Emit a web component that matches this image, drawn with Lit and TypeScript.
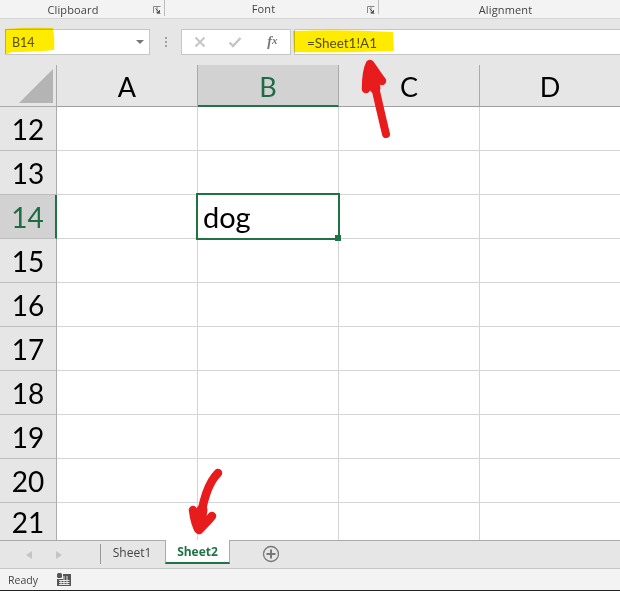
import { LitElement, html, css, svg } from "lit";
import { customElement } from "lit/decorators.js";

const COLS = ["A", "B", "C", "D"];
const ROWS = [12, 13, 14, 15, 16, 17, 18, 19, 20, 21];

@customElement("app-root")
export class AppRoot extends LitElement {
  static styles = css`
    :host { display: block; position: relative; width: 620px; height: 591px; overflow: hidden; background: #fff; font-family: "Lato", "Liberation Sans", sans-serif; color: #000; }
    .ribbon { height: 18px; display: grid; grid-template-columns: 165px 214px 1fr; background: #f3f3f3; border-bottom: 1px solid #d4d4d4; box-sizing: content-box; font-family: "Open Sans", sans-serif; font-size: 11px; letter-spacing: 0.15px; color: #444; }
    .group { position: relative; display: flex; align-items: center; justify-content: center; height: 14px; padding-top: 2px; border-right: 1px solid #bdbdbd; }
    .group:last-child { border-right: 0; padding-left: 12px; padding-right: 0; }
    .group.clip { padding-right: 18px; }
    .group.font { box-sizing: border-box; padding-left: 2px; padding-right: 18px; }
    .launch { position: absolute; right: 3px; top: 6px; width: 8px; height: 8px; }
    .fbar { height: 36px; background: #e6e6e6; display: flex; align-items: flex-end; box-sizing: border-box; padding-left: 5px; }
    .name { width: 145px; height: 26px; box-sizing: border-box; background: #fff; border: 1px solid #c6c6c6; display: flex; align-items: center; justify-content: space-between; padding: 0 5px 0 6px; font: 12.5px "Lato", sans-serif; color: #555; }
    .caret { width: 0; height: 0; border-left: 4px solid transparent; border-right: 4px solid transparent; border-top: 4px solid #777; }
    .grip { width: 31px; display: flex; flex-direction: column; align-items: center; justify-content: center; gap: 2px; height: 26px; }
    .grip i { width: 2px; height: 2px; background: #a0a0a0; }
    .tools { width: 110px; height: 26px; box-sizing: border-box; background: #fff; border: 1px solid #c6c6c6; display: flex; align-items: center; }
    .tools span { flex: 1; display: flex; justify-content: center; }
    .fx { font: italic bold 14px "Liberation Serif", serif; color: #777; padding-left: 2px; }
    .fx small { font-size: 11px; }
    .formula { flex: 1; height: 26px; margin-left: 3px; box-sizing: border-box; background: #fff; border: 1px solid #c6c6c6; border-right: 0; display: flex; align-items: center; padding: 1px 0 0 12px; font: 13.5px "Lato", sans-serif; color: #555; }
    .gap { height: 10px; background: #e6e6e6; }
    .sheet { display: grid; grid-template-columns: 57px repeat(4, 141px); grid-template-rows: 42px repeat(9, 44px) 38px; height: 475px; overflow: hidden; }
    .cell { box-sizing: border-box; border-right: 1px solid #d4d4d4; border-bottom: 1px solid #d4d4d4; background: #fff; font-size: 29px; display: flex; align-items: center; padding-left: 5px; }
    .corner { background: #e6e6e6; border-right: 1px solid #ababab; border-bottom: 1px solid #ababab; display: flex; align-items: flex-end; justify-content: flex-end; padding: 0 3px 3px 0; box-sizing: border-box; }
    .ch { box-sizing: border-box; background: #e6e6e6; border-right: 1px solid #ababab; border-bottom: 1px solid #9f9f9f; display: flex; align-items: center; justify-content: center; font-size: 27px; padding-top: 2px; }
    .ch.on { background: #d2d2d2; color: #1f6b45; border-bottom: 2px solid #217346; }
    .rh { box-sizing: border-box; background: #e6e6e6; border-right: 1px solid #ababab; border-bottom: 1px solid #bdbdbd; display: flex; align-items: center; justify-content: center; font-size: 28px; }
    .rh.on { background: #d2d2d2; color: #1f6b45; border-right: 2px solid #217346; }
    .selected { position: relative; overflow: visible; }
    .selected::after { content: ""; position: absolute; left: -2px; top: -2px; right: -2px; bottom: -2px; border: 2px solid #217346; pointer-events: none; }
    .selected::before { content: ""; position: absolute; right: -3px; bottom: -3px; width: 6px; height: 6px; background: #217346; z-index: 1; }
    .tabs { height: 29px; box-sizing: border-box; background: #e6e6e6; border-top: 1px solid #ababab; border-bottom: 1px solid #c6c6c6; display: flex; align-items: flex-start; font: 12px "Open Sans", sans-serif; color: #444; }
    .nav { width: 100px; margin-top: 3px; display: flex; align-items: center; box-sizing: content-box; border-right: 1px solid #999; flex-shrink: 0; height: 20px; }
    .nav svg { display: block; }
    .tab { width: 64px; height: 23px; display: flex; align-items: center; justify-content: center; box-sizing: border-box; }
    .tab.plain { padding-right: 2px; }
    .tab.active { width: 65px; background: #fff; color: #217346; font-weight: 700; border-bottom: 2px solid #217346; border-left: 1px solid #ababab; border-right: 1px solid #ababab; margin-top: -1px; height: 24px; }
    .add { margin-left: 32px; margin-top: 4px; display: block; }
    .status { height: 22px; background: #f3f3f3; border-bottom: 1px solid #222; display: flex; align-items: center; box-sizing: border-box; padding-left: 8px; gap: 19px; font: 10.5px "Open Sans", sans-serif; color: #444; }
    .marks { position: absolute; left: 0; top: 0; width: 620px; height: 591px; pointer-events: none; }
    .hl { mix-blend-mode: multiply; }
  `;

  private launcher() {
    return html`<svg class="launch" viewBox="0 0 8 8"><path d="M.5 7V.5H7.5M4 1v6.5h3.5" fill="none" stroke="#888"/><path d="M2.5 2.5L6.5 6.5M6.5 4v2.5H4" fill="none" stroke="#555"/></svg>`;
  }

  render() {
    return html`
      <div class="ribbon">
        <div class="group clip">Clipboard${this.launcher()}</div>
        <div class="group font">Font${this.launcher()}</div>
        <div class="group">Alignment</div>
      </div>
      <div class="fbar">
        <div class="name"><span>B14</span><span class="caret"></span></div>
        <div class="grip"><i></i><i></i><i></i></div>
        <div class="tools">
          <span><svg width="12" height="12" viewBox="0 0 12 12"><path d="M1.5 1.5L10.5 10.5M10.5 1.5L1.5 10.5" stroke="#c4c4c4" stroke-width="1.8"/></svg></span>
          <span><svg width="14" height="12" viewBox="0 0 14 12"><path d="M1.5 6.5L5 10L12.5 2" fill="none" stroke="#c4c4c4" stroke-width="2.4"/></svg></span>
          <span class="fx">f<small>x</small></span>
        </div>
        <div class="formula">=Sheet1!A1</div>
      </div>
      <div class="gap"></div>
      <div class="sheet">
        <div class="corner"><svg width="34" height="34" viewBox="0 0 34 34"><path d="M34 0V34H0Z" fill="#b4b4b4"/></svg></div>
        ${COLS.map((c) => html`<div class="ch ${c === "B" ? "on" : ""}">${c}</div>`)}
        ${ROWS.map((r) => html`
          <div class="rh ${r === 14 ? "on" : ""}">${r}</div>
          ${COLS.map((c) => html`<div class="cell ${r === 14 && c === "B" ? "selected" : ""}">${r === 14 && c === "B" ? "dog" : ""}</div>`)}
        `)}
      </div>
      <div class="tabs">
        <div class="nav">
          <svg width="100" height="20" viewBox="0 0 100 20"><path d="M32 7V15L26 11Z" fill="#c4c4c4"/><path d="M56 7V15L62 11Z" fill="#c4c4c4"/></svg>
        </div>
        <div class="tab plain">Sheet1</div>
        <div class="tab active">Sheet2</div>
        <svg class="add" width="18" height="18" viewBox="0 0 18 18"><circle cx="9" cy="9" r="7.5" fill="none" stroke="#777" stroke-width="1.3"/><path d="M9 4.5V13.5M4.5 9H13.5" stroke="#777" stroke-width="2"/></svg>
      </div>
      <div class="status">
        <span>Ready</span>
        <svg width="14" height="13" viewBox="0 0 14 13"><rect x="0" y="0" width="5" height="5" rx="1.5" fill="#555"/><path d="M6 1H14V13H0V6H6Z" fill="#555"/><path d="M2 7.5H12.5M2 9.5H12.5M2 11.5H12.5M4 7V12M7 3V12M10 3V12" stroke="#f3f3f3" stroke-width=".9"/></svg>
      </div>
      ${this.marks()}
    `;
  }

  private marks() {
    return html`<svg class="marks" viewBox="0 0 620 591">
      ${svg`
        <path class="hl" d="M5 29Q30 27 53 28Q55 40 54 50Q30 52 12 52Q6 54 5 54Z" fill="#ffeb00"/>
        <path class="hl" d="M293 31Q340 29 393 32L394 51Q340 53 294 52Z" fill="#ffeb00"/>
        <g fill="none" stroke="#e81c1c" stroke-linecap="round" stroke-linejoin="round">
          <path d="M373 78C378 100 382 118 386 134" stroke-width="8"/>
          <path d="M366 89C366 80 367 70 370 64C373 68 378 76 382 81" stroke-width="8.5"/>
          <path d="M370 68L375 88" stroke-width="11"/>
          <path d="M218 473C208 483 203 500 199 526" stroke-width="8.5"/>
          <path d="M193 510C194 518 196 526 199 530C203 526 208 521 212 516" stroke-width="8.5"/>
          <path d="M202 510L199 528" stroke-width="11"/>
        </g>
      `}
    </svg>`;
  }
}
